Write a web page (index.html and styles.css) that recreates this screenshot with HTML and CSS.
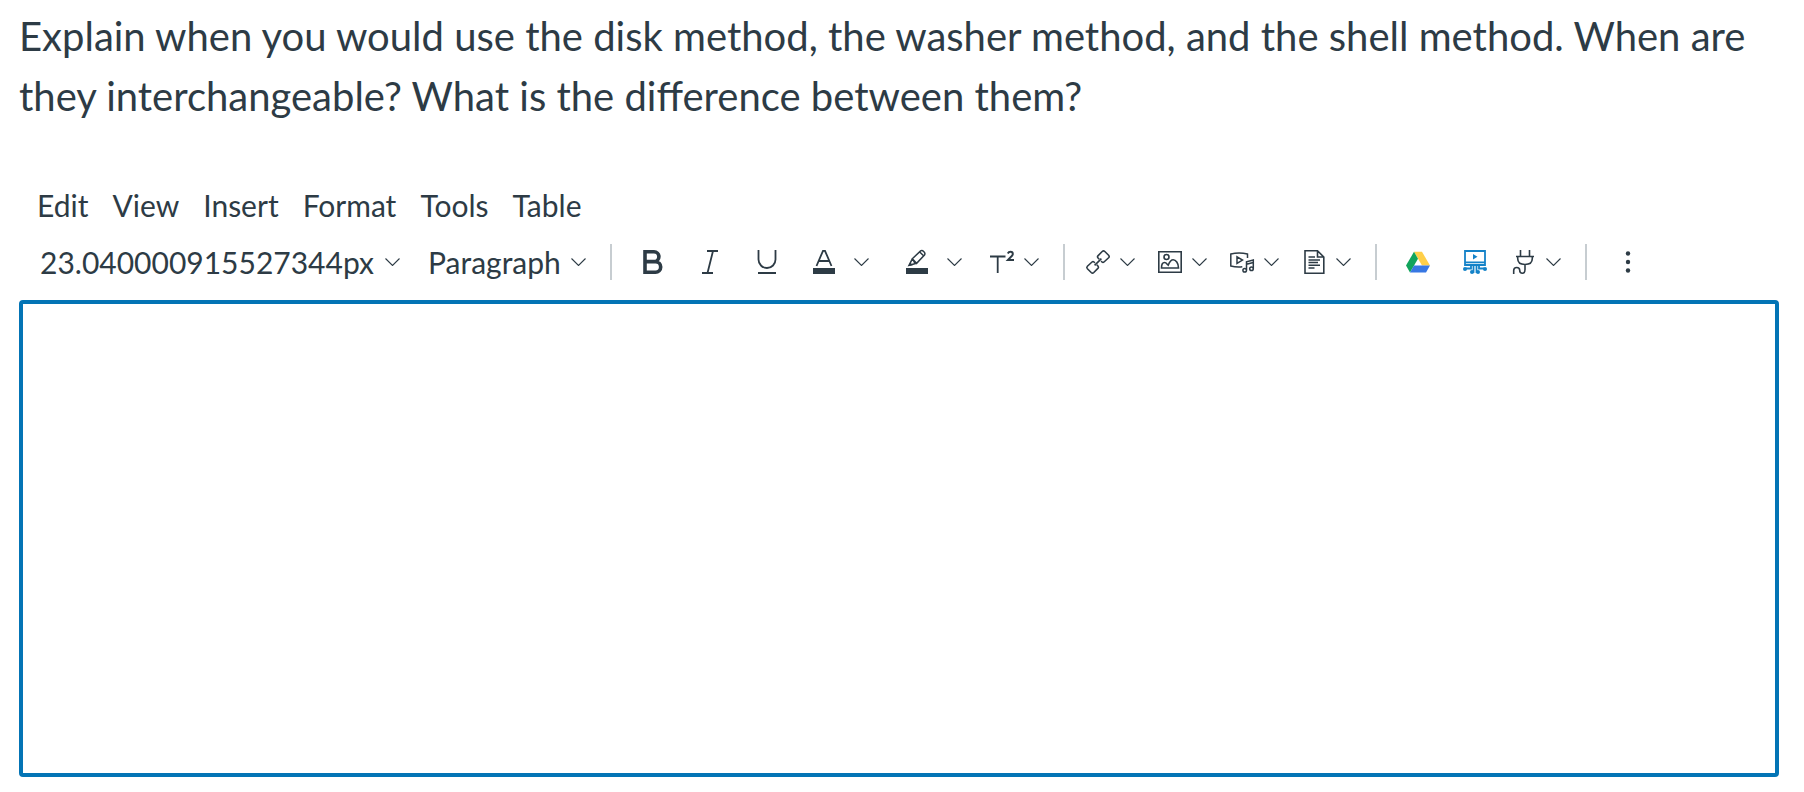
FILE: index.html
```html
<!DOCTYPE html>
<html lang="en">
<head>
<meta charset="utf-8">
<title>Essay question</title>
<link rel="stylesheet" href="styles.css">
</head>
<body>
<svg class="defs" aria-hidden="true">
  <symbol id="chevron" viewBox="0 0 15 8"><path d="M.5.5l7 7 7-7" fill="none" stroke="currentColor" stroke-width="1.1"/></symbol>
</svg>
<main class="question">
  <p class="prompt" id="prompt">Explain when you would use the disk method, the washer method, and the shell method. When are they interchangeable? What is the difference between them?</p>

  <div class="menubar" role="menubar">
    <button type="button" class="menu" role="menuitem">Edit</button>
    <button type="button" class="menu" role="menuitem">View</button>
    <button type="button" class="menu" role="menuitem">Insert</button>
    <button type="button" class="menu" role="menuitem">Format</button>
    <button type="button" class="menu" role="menuitem">Tools</button>
    <button type="button" class="menu" role="menuitem">Table</button>
  </div>

  <div class="toolbar" role="toolbar" aria-label="Formatting">
    <label class="dropdown"><select class="choice" aria-label="Font size"><option>23.040000915527344px</option></select><svg class="chevron"><use href="#chevron"/></svg></label>
    <label class="dropdown"><select class="choice" aria-label="Block style"><option>Paragraph</option></select><svg class="chevron"><use href="#chevron"/></svg></label>
    <span class="divider"></span>
    <button type="button" class="tool" aria-label="Bold"><svg class="icon" viewBox="0 0 24 24"><path d="M4 1.800h9a4.900 4.900 0 0 1 0 9.800H4zM4 11.800h10.500a5.200 5.200 0 0 1 0 10.400H4z" class="line" stroke-width="3.600"/></svg></button>
    <button type="button" class="tool" aria-label="Italic"><svg class="icon" viewBox="0 0 24 24"><path d="M9 1h11M4 23h11M15 1L9.500 23" class="line" stroke-width="1.800"/></svg></button>
    <button type="button" class="tool" aria-label="Underline"><svg class="icon" viewBox="0 0 24 24"><path d="M3.500 0v9.500a8.500 8.500 0 0 0 17 0V0M3 23h18" class="line" stroke-width="1.800"/></svg></button>
    <button type="button" class="tool" aria-label="Text color"><svg class="icon" viewBox="0 0 24 24"><path d="M4.500 16L11 .8h2L19.500 16M6.800 11h10.400" class="line" stroke-width="1.800"/><path d="M1 18h22v6H1z" fill="currentColor"/></svg></button>
    <button type="button" class="more" aria-label="Text colors"><svg class="chevron"><use href="#chevron"/></svg></button>
    <button type="button" class="tool" aria-label="Highlight"><svg class="icon" viewBox="0 0 24 24"><path d="M7.300 8.800L15.600.9q1.500-.9 3.300.8 1.700 1.700.6 3.300l-7.900 8.300zM7.300 8.800L4 15.300l7.600-2M8 9.500l1.800 3.600M15 2.200l3.300 3.300" class="line" stroke-width="1.500"/><path d="M3.500 16l1.800-3.500 2.500 2.700z" fill="currentColor"/><path d="M1 18h22v6H1z" fill="currentColor"/></svg></button>
    <button type="button" class="more" aria-label="Highlight colors"><svg class="chevron"><use href="#chevron"/></svg></button>
    <button type="button" class="combo" aria-label="Superscript"><svg class="icon" viewBox="0 0 24 24"><path d="M0 6.500h15.500M7.700 6.500V23" class="line" stroke-width="1.800"/><path d="M17.800 3.500q.8-1.700 2.800-1.700 2.200 0 2.200 2.100 0 1.500-2 3.200L18 9.900h6" class="line" stroke-width="2"/></svg><svg class="chevron"><use href="#chevron"/></svg></button>
    <span class="divider"></span>
    <button type="button" class="combo" aria-label="Links"><svg class="icon" viewBox="0 0 24 24"><g class="line" stroke-width="1.600"><path id="link-half" d="M13.200 9.300l-1.300-1.500q-.8-1 0-1.900L16.200 1.500q1.300-1.200 2.600 0l3.800 3.700q1.200 1.300 0 2.600L18 12q-1 .8-2 0l-1-.8"/><use href="#link-half" transform="rotate(180 12 12)"/><path d="M8.600 15.400l6.800-6.800"/></g></svg><svg class="chevron"><use href="#chevron"/></svg></button>
    <button type="button" class="combo" aria-label="Images"><svg class="icon" viewBox="0 0 24 24"><g class="line" stroke-width="1.600"><path d="M.8 1.800h22.400v20.400H.8z"/><circle cx="8.500" cy="7" r="2.500"/><path d="M3.500 18c0-4 1.500-5.500 3-5.500 1.300 0 1.800.5 2.500 1.500l1.200 1.200C11.500 12 13 9.800 15.200 9.800c2.500 0 5.300 3.200 5.300 8.200z"/></g></svg><svg class="chevron"><use href="#chevron"/></svg></button>
    <button type="button" class="combo" aria-label="Record or upload media"><svg class="icon" viewBox="0 0 24 24"><g class="line" stroke-width="1.500"><path d="M17.500 8V4Q9 2.200.8 4v12q5.500 1.400 11.500.8M7 6.800v6.600l5.500-3.300zM16.500 19.800v-8l6.800-1.800v8.500M16.500 14.300l6.800-1.800"/><circle cx="14.700" cy="20.300" r="1.800"/><circle cx="21.500" cy="18.700" r="1.800"/></g></svg><svg class="chevron"><use href="#chevron"/></svg></button>
    <button type="button" class="combo" aria-label="Documents"><svg class="icon" viewBox="0 0 24 24"><g class="line" stroke-width="1.600"><path d="M3 .8h12.500L21.800 7v16.200H3zM15.500.8V7h6.300M6.500 7H13M6.500 10h11.500M6.500 12.500H16M6.500 15.300h11.500M6.500 18h6"/></g></svg><svg class="chevron"><use href="#chevron"/></svg></button>
    <span class="divider"></span>
    <button type="button" class="tool" aria-label="Google Drive"><svg class="icon" viewBox="0 0 24 24"><path d="M8 1.800h8L24 15.500h-8z" fill="#ffcf48"/><path d="M8 1.800l4 6.900L4 22.500 0 15.500z" fill="#11a45c"/><path d="M8 15.500h16l-4 7H4z" fill="#3777e3"/></svg></button>
    <button type="button" class="tool" aria-label="Studio"><svg class="icon studio" viewBox="0 0 24 24"><path d="M2 1h20v14H2zM2 12.400h20M8 15v3.500H3M10.500 15v7H8.500M13.500 15v7h2M16 15v3.500h5" class="line" stroke-width="1.800"/><path d="M10 4v5.500l4.500-2.700z" fill="currentColor"/><g fill="currentColor"><circle cx="2" cy="19" r="2"/><circle cx="22" cy="19" r="2"/><circle cx="9" cy="22" r="2"/><circle cx="15" cy="22" r="2"/></g></svg></button>
    <button type="button" class="combo" aria-label="Apps"><svg class="icon" viewBox="0 0 24 24"><g class="line" stroke-width="1.600"><path d="M8.500 0v6M17.500 0v6M4 6.500h18M5.700 6.500v2q0 6 7.300 6t7.300-6v-2M13 14.500v5q0 3.700-2.600 3.700-2.700 0-2.700-3 0-2.700-3-2.700-3 0-3 3V24"/></g></svg><svg class="chevron"><use href="#chevron"/></svg></button>
    <span class="divider"></span>
    <button type="button" class="tool" aria-label="More"><svg class="icon" viewBox="0 0 24 24" fill="currentColor"><circle cx="12" cy="3.500" r="2.200"/><circle cx="12" cy="12" r="2.200"/><circle cx="12" cy="20.500" r="2.200"/></svg></button>
  </div>

  <textarea class="answer" aria-labelledby="prompt"></textarea>
</main>
</body>
</html>
```

FILE: styles.css
```css
* {
  box-sizing: border-box;
}

body {
  margin: 0;
  background: #fff;
  color: #2d3b45;
  font-family: Lato, "Liberation Sans", sans-serif;
}

.defs {
  display: none;
}

.question {
  display: flex;
  flex-direction: column;
  min-height: 100vh;
  padding: 6px 25px 15px 19px;
}

.prompt {
  margin: 0 0 55px;
  font-size: 40px;
  line-height: 60px;
}

button,
.choice {
  margin: 0;
  padding: 0;
  border: 0;
  background: none;
  color: inherit;
  font: inherit;
}

.menubar {
  display: flex;
  gap: 24px;
  padding-left: 18px;
  font-size: 30px;
  line-height: 48px;
}

.toolbar {
  display: flex;
  align-items: center;
  height: 66px;
  margin-bottom: 5px;
  padding-left: 7px;
}

.dropdown {
  display: flex;
  align-items: center;
  gap: 10px;
  padding: 0 14px;
}

.choice {
  appearance: none;
  font-size: 30px;
  line-height: 40px;
}

.divider {
  flex: none;
  width: 2px;
  height: 36px;
  margin: 0 12px 0 10px;
  background: #c7cdd1;
}

.tool,
.combo,
.more {
  display: flex;
  flex: none;
  align-items: center;
  height: 48px;
}

.tool {
  justify-content: center;
  width: 57px;
}

.combo {
  gap: 10px;
  width: 72px;
  padding-left: 9px;
}

.more {
  width: 36px;
  padding-left: 2px;
}

.icon {
  flex: none;
  width: 24px;
  height: 24px;
  overflow: visible;
}

.line {
  fill: none;
  stroke: currentColor;
}

.chevron {
  flex: none;
  width: 15px;
  height: 8px;
}

.studio {
  color: #1482c8;
}

.answer {
  flex: 1;
  width: 100%;
  padding: 16px;
  border: 4px solid #0374b5;
  border-radius: 4px;
  outline: 0;
  background: #fff;
  color: inherit;
  font: inherit;
  font-size: 30px;
  resize: none;
}
```
